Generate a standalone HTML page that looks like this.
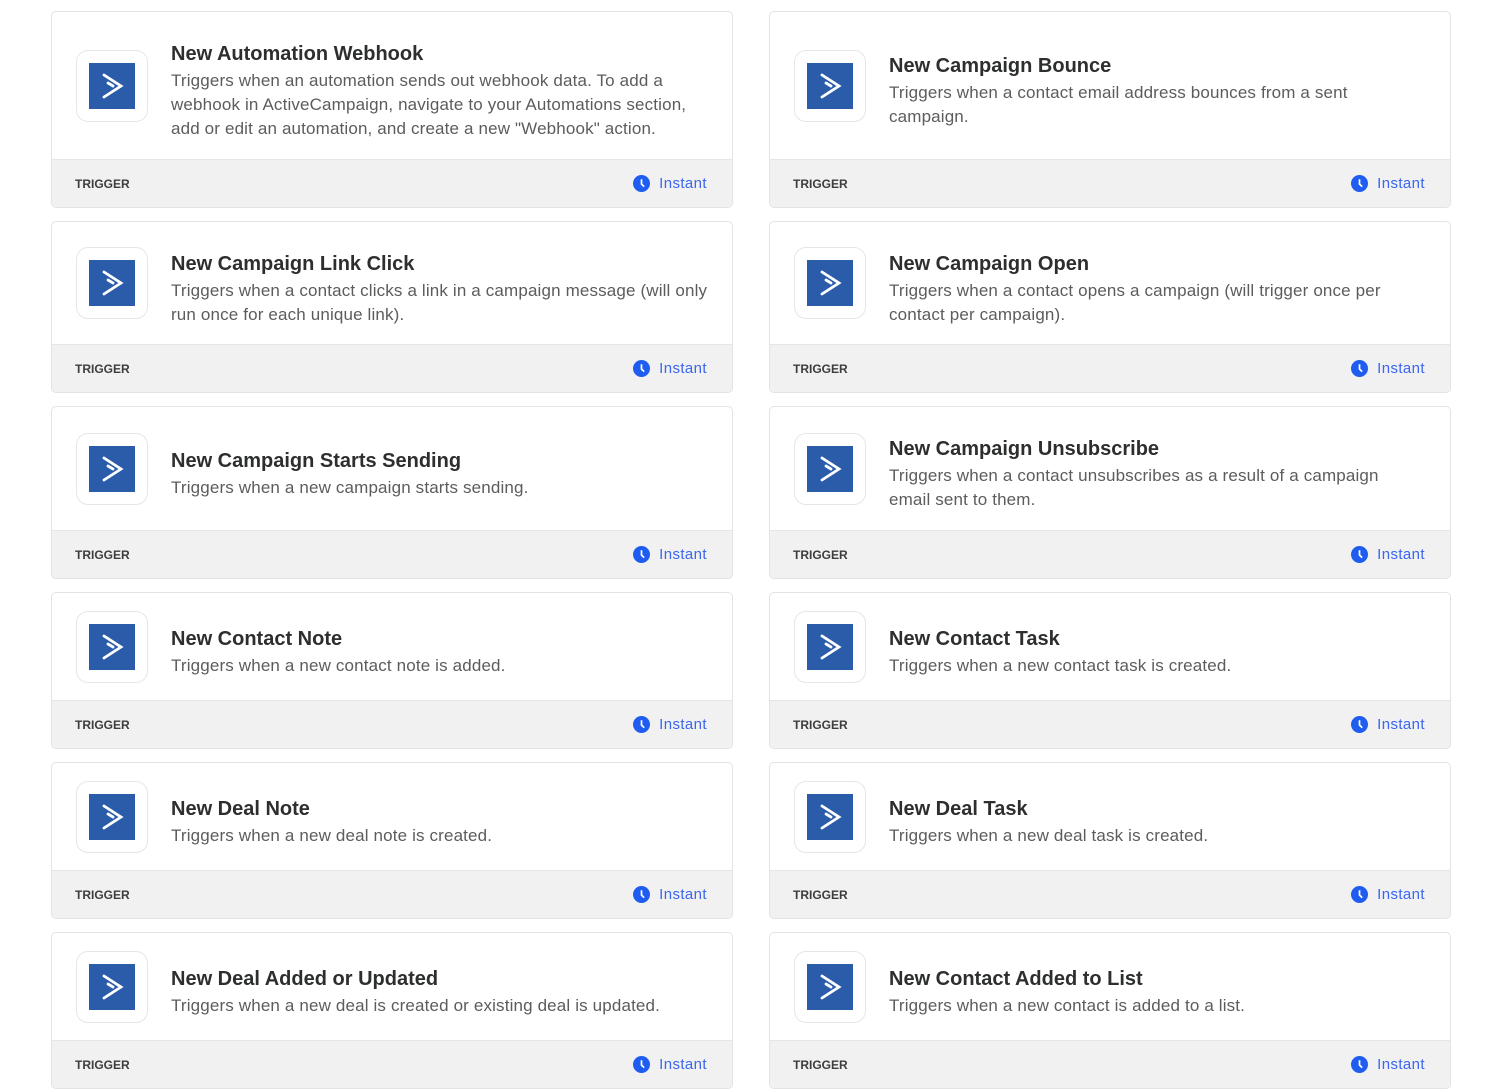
<!DOCTYPE html>
<html><head><style>
*{box-sizing:border-box;margin:0;padding:0}
body{width:1500px;height:1057px;overflow:hidden;background:#fff;font-family:"Liberation Sans",sans-serif}
.grid{position:absolute;left:51px;top:11px;width:1400px;display:grid;grid-template-columns:682px 682px;column-gap:36px;row-gap:13px;grid-template-rows:197px 172px 173px 157px 157px 157px}
.card{border:1px solid #e3e3e3;border-radius:5px;display:flex;flex-direction:column;overflow:hidden;background:#fff}
.body{flex:1;display:flex;align-items:center;padding:11px 24px 0}
.ic{width:72px;height:72px;border:1px solid #e6e6e6;border-radius:12px;flex:none;display:flex;align-items:center;justify-content:center;margin-right:23px;margin-top:-11px}
.ic div{width:46px;height:46px;background:#2a5caa;display:flex;align-items:center;justify-content:center}
.t{font-size:20px;font-weight:bold;color:#2d2e2e;line-height:27px;margin-bottom:1px}
.d{font-size:17px;color:#5b5c5e;line-height:24px;letter-spacing:0.15px;white-space:nowrap}
.foot{height:48px;background:#f1f1f1;border-top:1px solid #e6e6e6;display:flex;align-items:center;justify-content:space-between;padding:0 25px 0 23px}
.tr{font-size:12px;font-weight:bold;color:#3d3d3d}
.in{font-size:15px;color:#3a66f0;display:flex;align-items:center;gap:9px;letter-spacing:0.4px}
</style></head><body>
<div class="grid">
<div class="card"><div class="body"><div class="ic"><div><svg width="30" height="30" viewBox="0 0 30 30"><path d="M7 4L24 15L7 26M11 12L16 15" stroke="#fff" stroke-width="2.8" fill="none" stroke-linecap="round"/></svg></div></div><div><div class="t">New Automation Webhook</div><div class="d">Triggers when an automation sends out webhook data. To add a<br>webhook in ActiveCampaign, navigate to your Automations section,<br>add or edit an automation, and create a new "Webhook" action.</div></div></div><div class="foot"><span class="tr">TRIGGER</span><span class="in"><svg width="17" height="17" viewBox="0 0 16 16"><circle cx="8" cy="8" r="8" fill="#1f5cf0"/><path d="M8 4V8.5L10.5 11" stroke="#fff" stroke-width="1.6" fill="none"/></svg>Instant</span></div></div>
<div class="card"><div class="body"><div class="ic"><div><svg width="30" height="30" viewBox="0 0 30 30"><path d="M7 4L24 15L7 26M11 12L16 15" stroke="#fff" stroke-width="2.8" fill="none" stroke-linecap="round"/></svg></div></div><div><div class="t">New Campaign Bounce</div><div class="d">Triggers when a contact email address bounces from a sent<br>campaign.</div></div></div><div class="foot"><span class="tr">TRIGGER</span><span class="in"><svg width="17" height="17" viewBox="0 0 16 16"><circle cx="8" cy="8" r="8" fill="#1f5cf0"/><path d="M8 4V8.5L10.5 11" stroke="#fff" stroke-width="1.6" fill="none"/></svg>Instant</span></div></div>
<div class="card"><div class="body"><div class="ic"><div><svg width="30" height="30" viewBox="0 0 30 30"><path d="M7 4L24 15L7 26M11 12L16 15" stroke="#fff" stroke-width="2.8" fill="none" stroke-linecap="round"/></svg></div></div><div><div class="t">New Campaign Link Click</div><div class="d">Triggers when a contact clicks a link in a campaign message (will only<br>run once for each unique link).</div></div></div><div class="foot"><span class="tr">TRIGGER</span><span class="in"><svg width="17" height="17" viewBox="0 0 16 16"><circle cx="8" cy="8" r="8" fill="#1f5cf0"/><path d="M8 4V8.5L10.5 11" stroke="#fff" stroke-width="1.6" fill="none"/></svg>Instant</span></div></div>
<div class="card"><div class="body"><div class="ic"><div><svg width="30" height="30" viewBox="0 0 30 30"><path d="M7 4L24 15L7 26M11 12L16 15" stroke="#fff" stroke-width="2.8" fill="none" stroke-linecap="round"/></svg></div></div><div><div class="t">New Campaign Open</div><div class="d">Triggers when a contact opens a campaign (will trigger once per<br>contact per campaign).</div></div></div><div class="foot"><span class="tr">TRIGGER</span><span class="in"><svg width="17" height="17" viewBox="0 0 16 16"><circle cx="8" cy="8" r="8" fill="#1f5cf0"/><path d="M8 4V8.5L10.5 11" stroke="#fff" stroke-width="1.6" fill="none"/></svg>Instant</span></div></div>
<div class="card"><div class="body"><div class="ic"><div><svg width="30" height="30" viewBox="0 0 30 30"><path d="M7 4L24 15L7 26M11 12L16 15" stroke="#fff" stroke-width="2.8" fill="none" stroke-linecap="round"/></svg></div></div><div><div class="t">New Campaign Starts Sending</div><div class="d">Triggers when a new campaign starts sending.</div></div></div><div class="foot"><span class="tr">TRIGGER</span><span class="in"><svg width="17" height="17" viewBox="0 0 16 16"><circle cx="8" cy="8" r="8" fill="#1f5cf0"/><path d="M8 4V8.5L10.5 11" stroke="#fff" stroke-width="1.6" fill="none"/></svg>Instant</span></div></div>
<div class="card"><div class="body"><div class="ic"><div><svg width="30" height="30" viewBox="0 0 30 30"><path d="M7 4L24 15L7 26M11 12L16 15" stroke="#fff" stroke-width="2.8" fill="none" stroke-linecap="round"/></svg></div></div><div><div class="t">New Campaign Unsubscribe</div><div class="d">Triggers when a contact unsubscribes as a result of a campaign<br>email sent to them.</div></div></div><div class="foot"><span class="tr">TRIGGER</span><span class="in"><svg width="17" height="17" viewBox="0 0 16 16"><circle cx="8" cy="8" r="8" fill="#1f5cf0"/><path d="M8 4V8.5L10.5 11" stroke="#fff" stroke-width="1.6" fill="none"/></svg>Instant</span></div></div>
<div class="card"><div class="body"><div class="ic"><div><svg width="30" height="30" viewBox="0 0 30 30"><path d="M7 4L24 15L7 26M11 12L16 15" stroke="#fff" stroke-width="2.8" fill="none" stroke-linecap="round"/></svg></div></div><div><div class="t">New Contact Note</div><div class="d">Triggers when a new contact note is added.</div></div></div><div class="foot"><span class="tr">TRIGGER</span><span class="in"><svg width="17" height="17" viewBox="0 0 16 16"><circle cx="8" cy="8" r="8" fill="#1f5cf0"/><path d="M8 4V8.5L10.5 11" stroke="#fff" stroke-width="1.6" fill="none"/></svg>Instant</span></div></div>
<div class="card"><div class="body"><div class="ic"><div><svg width="30" height="30" viewBox="0 0 30 30"><path d="M7 4L24 15L7 26M11 12L16 15" stroke="#fff" stroke-width="2.8" fill="none" stroke-linecap="round"/></svg></div></div><div><div class="t">New Contact Task</div><div class="d">Triggers when a new contact task is created.</div></div></div><div class="foot"><span class="tr">TRIGGER</span><span class="in"><svg width="17" height="17" viewBox="0 0 16 16"><circle cx="8" cy="8" r="8" fill="#1f5cf0"/><path d="M8 4V8.5L10.5 11" stroke="#fff" stroke-width="1.6" fill="none"/></svg>Instant</span></div></div>
<div class="card"><div class="body"><div class="ic"><div><svg width="30" height="30" viewBox="0 0 30 30"><path d="M7 4L24 15L7 26M11 12L16 15" stroke="#fff" stroke-width="2.8" fill="none" stroke-linecap="round"/></svg></div></div><div><div class="t">New Deal Note</div><div class="d">Triggers when a new deal note is created.</div></div></div><div class="foot"><span class="tr">TRIGGER</span><span class="in"><svg width="17" height="17" viewBox="0 0 16 16"><circle cx="8" cy="8" r="8" fill="#1f5cf0"/><path d="M8 4V8.5L10.5 11" stroke="#fff" stroke-width="1.6" fill="none"/></svg>Instant</span></div></div>
<div class="card"><div class="body"><div class="ic"><div><svg width="30" height="30" viewBox="0 0 30 30"><path d="M7 4L24 15L7 26M11 12L16 15" stroke="#fff" stroke-width="2.8" fill="none" stroke-linecap="round"/></svg></div></div><div><div class="t">New Deal Task</div><div class="d">Triggers when a new deal task is created.</div></div></div><div class="foot"><span class="tr">TRIGGER</span><span class="in"><svg width="17" height="17" viewBox="0 0 16 16"><circle cx="8" cy="8" r="8" fill="#1f5cf0"/><path d="M8 4V8.5L10.5 11" stroke="#fff" stroke-width="1.6" fill="none"/></svg>Instant</span></div></div>
<div class="card"><div class="body"><div class="ic"><div><svg width="30" height="30" viewBox="0 0 30 30"><path d="M7 4L24 15L7 26M11 12L16 15" stroke="#fff" stroke-width="2.8" fill="none" stroke-linecap="round"/></svg></div></div><div><div class="t">New Deal Added or Updated</div><div class="d">Triggers when a new deal is created or existing deal is updated.</div></div></div><div class="foot"><span class="tr">TRIGGER</span><span class="in"><svg width="17" height="17" viewBox="0 0 16 16"><circle cx="8" cy="8" r="8" fill="#1f5cf0"/><path d="M8 4V8.5L10.5 11" stroke="#fff" stroke-width="1.6" fill="none"/></svg>Instant</span></div></div>
<div class="card"><div class="body"><div class="ic"><div><svg width="30" height="30" viewBox="0 0 30 30"><path d="M7 4L24 15L7 26M11 12L16 15" stroke="#fff" stroke-width="2.8" fill="none" stroke-linecap="round"/></svg></div></div><div><div class="t">New Contact Added to List</div><div class="d">Triggers when a new contact is added to a list.</div></div></div><div class="foot"><span class="tr">TRIGGER</span><span class="in"><svg width="17" height="17" viewBox="0 0 16 16"><circle cx="8" cy="8" r="8" fill="#1f5cf0"/><path d="M8 4V8.5L10.5 11" stroke="#fff" stroke-width="1.6" fill="none"/></svg>Instant</span></div></div>
</div>
</body></html>
